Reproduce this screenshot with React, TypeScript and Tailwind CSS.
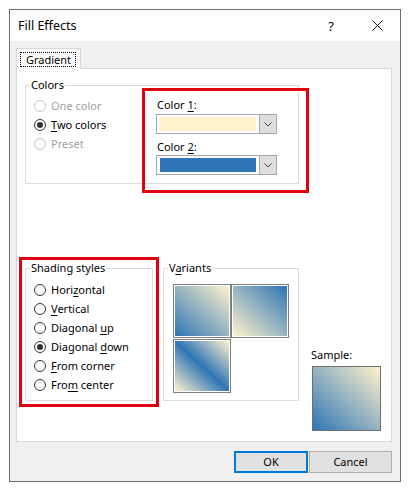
import React from "react";

function Radio({
  checked,
  disabled,
  children,
}: {
  checked?: boolean;
  disabled?: boolean;
  children: React.ReactNode;
}) {
  return (
    <div className="flex items-center h-[19px]">
      <span
        className={`w-[12px] h-[12px] rounded-full border bg-white flex items-center justify-center ${
          disabled ? "border-[#c4c4c4]" : "border-[#333333]"
        }`}
      >
        {checked && <span className="w-[6px] h-[6px] rounded-full bg-[#333333]" />}
      </span>
      <span className={`ml-[5px] ${disabled ? "text-[#a0a0a0]" : "text-black"}`}>{children}</span>
    </div>
  );
}

function Chevron() {
  return (
    <svg width="8" height="5" viewBox="0 0 8 5" className="block">
      <polyline points="0.5,0.5 4,4 7.5,0.5" fill="none" stroke="#444444" strokeWidth="1" />
    </svg>
  );
}

function Combo({ color }: { color: string }) {
  return (
    <div className="flex h-[20px] w-[121px]">
      <div className="flex-1 border border-[#a6a6a6] border-r-0 bg-white pl-[3px] pr-[3px] py-[2px]">
        <div className="h-full w-full" style={{ backgroundColor: color }} />
      </div>
      <div className="w-[18px] border border-[#a6a6a6] bg-[#dedede] flex items-center justify-center">
        <Chevron />
      </div>
    </div>
  );
}

export default function App() {
  return (
    <div className="w-[412px] h-[489px] bg-white pt-[9px] pl-[9px] font-['Noto_Sans',sans-serif] text-[11px] leading-[16px] text-black">
      <div className="w-[392px] h-[473px] border border-[#6e6e6e] flex flex-col">
        {/* Title bar */}
        <div className="h-[31px] bg-white flex items-center pl-[8px] shrink-0">
          <span className="text-[12.5px]">Fill Effects</span>
          <div className="ml-auto flex h-full">
            <div className="w-[46px] h-full flex items-center justify-center text-[13px]">?</div>
            <div className="w-[46px] h-full flex items-center justify-center">
              <svg width="11" height="11" viewBox="0 0 11 11">
                <path d="M0.5 0.5 L10.5 10.5 M10.5 0.5 L0.5 10.5" stroke="#111111" strokeWidth="1" fill="none" />
              </svg>
            </div>
          </div>
        </div>

        {/* Body */}
        <div className="flex-1 bg-[#f0f0f0] pl-[6px] pr-[8px] pt-[7px]">
          {/* Tab */}
          <div className="relative z-10 w-[65px] h-[21px] -mb-[1px] border border-b-0 border-[#d9d9d9] bg-white pl-[3px] pt-[3px]">
            <div className="w-[56px] h-[15px] border border-dotted border-black pl-[5px] leading-[13px]">
              Gradient
            </div>
          </div>

          {/* Panel */}
          <div className="relative w-[376px] h-[374px] border border-[#d9d9d9] bg-white pl-[8px] pt-[8px]">
            {/* Colors group */}
            <fieldset className="w-[274px] h-[107px] border border-[#dcdcdc]">
              <legend className="ml-[4px] px-[1px] leading-[16px]">Colors</legend>
              <div className="flex">
                <div className="w-[130px] pl-[8px] pt-[3px]">
                  <Radio disabled>One color</Radio>
                  <Radio checked>
                    <u className="underline-offset-2">T</u>wo colors
                  </Radio>
                  <Radio disabled>Preset</Radio>
                </div>
                <div className="pt-[4px]">
                  <div className="h-[16px] pl-[1px]">
                    Color <u className="underline-offset-2">1</u>:
                  </div>
                  <div className="mt-[1px]">
                    <Combo color="#fff2cc" />
                  </div>
                  <div className="h-[16px] pl-[1px] mt-[5px]">
                    Color <u className="underline-offset-2">2</u>:
                  </div>
                  <div>
                    <Combo color="#2e75b6" />
                  </div>
                </div>
              </div>
            </fieldset>

            {/* Second row */}
            <div className="flex mt-[76px]">
              <fieldset className="w-[128px] h-[141px] border border-[#dcdcdc]">
                <legend className="ml-[4px] px-[1px] leading-[16px]">Shading styles</legend>
                <div className="pl-[8px] pt-[4px]">
                  <Radio>
                    Hori<u className="underline-offset-2">z</u>ontal
                  </Radio>
                  <Radio>
                    <u className="underline-offset-2">V</u>ertical
                  </Radio>
                  <Radio>
                    Diagonal <u className="underline-offset-2">u</u>p
                  </Radio>
                  <Radio checked>
                    Diagonal <u className="underline-offset-2">d</u>own
                  </Radio>
                  <Radio>
                    <u className="underline-offset-2">F</u>rom corner
                  </Radio>
                  <Radio>
                    Fro<u className="underline-offset-2">m</u> center
                  </Radio>
                </div>
              </fieldset>

              <fieldset className="ml-[10px] w-[136px] h-[141px] border border-[#dcdcdc]">
                <legend className="ml-[4px] px-[1px] leading-[16px]">
                  V<u className="underline-offset-2">a</u>riants
                </legend>
                <div className="pl-[9px] pt-[8px]">
                  <div className="grid grid-cols-[58px_58px] gap-y-[1px]">
                    <div className="h-[54px] border border-[#808080] p-[1px] bg-white">
                      <div className="h-full w-full bg-[linear-gradient(to_top_right,#2e75b6,#fff2cc)]" />
                    </div>
                    <div className="h-[54px] border border-[#808080] p-[1px] bg-white">
                      <div className="h-full w-full bg-[linear-gradient(to_bottom_left,#2e75b6,#fff2cc)]" />
                    </div>
                    <div className="h-[54px] border border-[#808080] p-[1px] bg-white">
                      <div className="h-full w-full bg-[linear-gradient(to_top_right,#fff2cc,#2e75b6,#fff2cc)]" />
                    </div>
                  </div>
                </div>
              </fieldset>

              <div className="ml-[12px] pt-[87px]">
                <div className="h-[16px]">Sample:</div>
                <div className="ml-[1px] mt-[3px] w-[69px] h-[65px] border border-[#6e6e6e] bg-[linear-gradient(to_top_right,#2e75b6,#fff2cc)]" />
              </div>
            </div>

            {/* Red annotation boxes */}
            <div className="pointer-events-none absolute left-[125px] top-[19px] w-[167px] h-[105px] border-[3px] border-[#e0000f]" />
            <div className="pointer-events-none absolute left-[2px] top-[188px] w-[140px] h-[150px] border-[3px] border-[#e0000f]" />
          </div>

          {/* Buttons */}
          <div className="flex justify-end mt-[9px]">
            <div className="w-[74px] h-[22px] border-2 border-[#0078d7] bg-[#e1e1e1] flex items-center justify-center mr-[1px]">
              OK
            </div>
            <div className="w-[83px] h-[22px] border border-[#adadad] bg-[#e1e1e1] flex items-center justify-center">
              Cancel
            </div>
          </div>
        </div>
      </div>
    </div>
  );
}
